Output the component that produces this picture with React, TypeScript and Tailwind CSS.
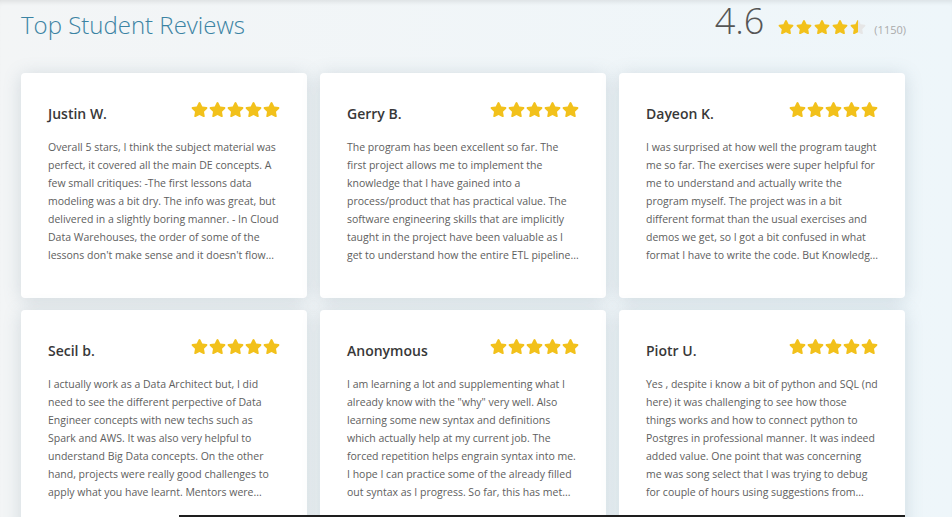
import React from "react";

type Review = { name: string; lines: string[] };

const reviews: Review[] = [
  {
    name: "Justin W.",
    lines: [
      "Overall 5 stars, I think the subject material was",
      "perfect, it covered all the main DE concepts. A",
      "few small critiques: -The first lessons data",
      "modeling was a bit dry. The info was great, but",
      "delivered in a slightly boring manner. - In Cloud",
      "Data Warehouses, the order of some of the",
      "lessons don't make sense and it doesn't flow...",
    ],
  },
  {
    name: "Gerry B.",
    lines: [
      "The program has been excellent so far. The",
      "first project allows me to implement the",
      "knowledge that I have gained into a",
      "process/product that has practical value. The",
      "software engineering skills that are implicitly",
      "taught in the project have been valuable as I",
      "get to understand how the entire ETL pipeline...",
    ],
  },
  {
    name: "Dayeon K.",
    lines: [
      "I was surprised at how well the program taught",
      "me so far. The exercises were super helpful for",
      "me to understand and actually write the",
      "program myself. The project was in a bit",
      "different format than the usual exercises and",
      "demos we get, so I got a bit confused in what",
      "format I have to write the code. But Knowledg...",
    ],
  },
  {
    name: "Secil b.",
    lines: [
      "I actually work as a Data Architect but, I did",
      "need to see the different perpective of Data",
      "Engineer concepts with new techs such as",
      "Spark and AWS. It was also very helpful to",
      "understand Big Data concepts. On the other",
      "hand, projects were really good challenges to",
      "apply what you have learnt. Mentors were...",
    ],
  },
  {
    name: "Anonymous",
    lines: [
      "I am learning a lot and supplementing what I",
      "already know with the \"why\" very well. Also",
      "learning some new syntax and definitions",
      "which actually help at my current job. The",
      "forced repetition helps engrain syntax into me.",
      "I hope I can practice some of the already filled",
      "out syntax as I progress. So far, this has met...",
    ],
  },
  {
    name: "Piotr U.",
    lines: [
      "Yes , despite i know a bit of python and SQL (nd",
      "here) it was challenging to see how those",
      "things works and how to connect python to",
      "Postgres in professional manner. It was indeed",
      "added value. One point that was concerning",
      "me was song select that I was trying to debug",
      "for couple of hours using suggestions from...",
    ],
  },
];

// font-awesome style star
const STAR =
  "M259.3 17.8L194 150.2 47.9 171.5c-26.2 3.8-36.7 36.1-17.7 54.6l105.7 103-25 145.5c-4.5 26.3 23.2 46 46.4 33.7L288 439.6l130.7 68.7c23.2 12.2 50.9-7.4 46.4-33.7l-25-145.5 105.7-103c19-18.5 8.5-50.8-17.7-54.6L382 150.2 316.7 17.8c-11.7-23.6-45.6-23.9-57.4 0z";

const Star = ({ size, half }: { size: number; half?: boolean }) => (
  <svg width={size} height={(size * 512) / 576} viewBox="0 0 576 512">
    <defs>
      <linearGradient id="halfstar">
        <stop offset="50%" stopColor="#f2c11b" />
        <stop offset="50%" stopColor="#e6e6e6" />
      </linearGradient>
    </defs>
    <path d={STAR} fill={half ? "url(#halfstar)" : "#f2c11b"} />
  </svg>
);

const ReviewCard = ({ review }: { review: Review }) => (
  <div className="bg-white rounded-[4px] shadow-[0_2px_18px_rgba(90,120,135,0.22)] pt-[31px] pb-[34px] pl-[27px] pr-[27px]">
    <div className="flex items-center justify-between">
      <span className="text-[14px] leading-5 font-semibold text-[#383838]">{review.name}</span>
      <div className="flex gap-[1px] -mt-[8px]">
        {[0, 1, 2, 3, 4].map((i) => (
          <Star key={i} size={17} />
        ))}
      </div>
    </div>
    <div className="mt-[14px] text-[10.5px] leading-[18px] text-[#5e5e5e]">
      {review.lines.map((l, i) => (
        <div key={i} className="whitespace-nowrap">
          {l}
        </div>
      ))}
    </div>
  </div>
);

export default function App() {
  return (
    <div
      className="relative h-[517px] overflow-hidden bg-gradient-to-r from-[#f3f5f6] to-[#eef6fa] shadow-[inset_0_5px_5px_-3px_rgba(0,0,0,0.09)]"
      style={{ fontFamily: "'Open Sans', 'Liberation Sans', sans-serif" }}
    >
      <div className="w-[884px] ml-[21px]">
        <div className="flex items-baseline justify-between pt-[3px]">
          <h1 className="text-[24px] leading-8 font-light text-[#3b83a3]">Top Student Reviews</h1>
          <div className="flex items-baseline mr-[-1px]">
            <span className="text-[36px] leading-none font-light text-[#555]">4.6</span>
            <div className="flex gap-[2px] ml-[14px] self-center translate-y-[6px]">
              {[0, 1, 2, 3].map((i) => (
                <Star key={i} size={16} />
              ))}
              <Star size={16} half />
            </div>
            <span className="ml-[8px] text-[11px] text-[#aaa]">(1150)</span>
          </div>
        </div>
        <div className="grid grid-cols-3 gap-x-[13px] gap-y-[12px] mt-[32px]">
          {reviews.map((r) => (
            <ReviewCard key={r.name} review={r} />
          ))}
        </div>
      </div>
      <div className="absolute bottom-0 left-[179px] w-[726px] h-[2px] bg-[#1e1e1e]" />
    </div>
  );
}
